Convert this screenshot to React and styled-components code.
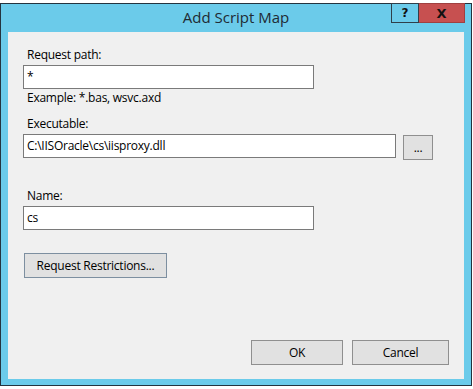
import React from "react";
import styled, { createGlobalStyle } from "styled-components";

const GlobalStyle = createGlobalStyle`
  html, body {
    margin: 0;
    padding: 0;
    background: #ffffff;
  }
  body {
    font-family: "Open Sans", "Noto Sans", sans-serif;
  }
`;

const Window = styled.div`
  position: relative;
  margin-top: 3px;
  width: 472px;
  height: 383px;
  box-sizing: border-box;
  border: 1px solid #24343f;
  background: #6bcbea;
  display: flex;
  flex-direction: column;
`;

const TitleBar = styled.div`
  height: 28px;
  display: flex;
  align-items: center;
  justify-content: center;
  font-size: 15px;
  color: #1f2a33;
  padding-bottom: 2px;
  box-sizing: border-box;
`;

const Caption = styled.div`
  position: absolute;
  top: -1px;
  right: 6px;
  display: flex;
`;

const CaptionButton = styled.div`
  width: ${(p) => (p.close ? "46px" : "28px")};
  height: 20px;
  box-sizing: border-box;
  border: 1px solid ${(p) => (p.close ? "#a04040" : "#2f3f4a")};
  border-left: ${(p) => (p.close ? "none" : "1px solid #2f3f4a")};
  background: ${(p) => (p.close ? "#c75050" : "transparent")};
  display: flex;
  align-items: center;
  justify-content: center;
  font-family: "DejaVu Sans", sans-serif;
  font-weight: bold;
  font-size: ${(p) => (p.close ? "13px" : "12px")};
  color: #111;
`;

const Frame = styled.div`
  flex: 1;
  padding: 0 7px 6px 7px;
  display: flex;
`;

const Client = styled.div`
  flex: 1;
  background: #f0f0f0;
  padding: 15px 15px 14px 15px;
  display: flex;
  flex-direction: column;
  font-size: 12px;
  letter-spacing: -0.25px;
  color: #000;
`;

const Label = styled.div`
  line-height: 16px;
  padding-left: 4px;
  margin-top: ${(p) => p.gap || 0}px;
  margin-bottom: 2px;
`;

const Hint = styled.div`
  line-height: 16px;
  padding-left: 4px;
  margin-top: 1px;
`;

const Row = styled.div`
  display: flex;
  align-items: flex-start;
  gap: 7px;
`;

const TextBox = styled.div`
  width: ${(p) => p.w}px;
  height: 24px;
  box-sizing: border-box;
  border: 1px solid #7a7a7a;
  background: #ffffff;
  padding: 3px 3px 0 3px;
  line-height: 16px;
  white-space: nowrap;
`;

const Button = styled.div`
  width: ${(p) => p.w}px;
  height: 25px;
  box-sizing: border-box;
  border: 1px solid ${(p) => (p.focus ? "#7d8fa0" : "#8f8f8f")};
  background: #e1e1e1;
  display: flex;
  align-items: center;
  justify-content: center;
  margin-top: ${(p) => p.top || 0}px;
  margin-left: ${(p) => p.left || 0}px;
`;

const Footer = styled.div`
  margin-top: auto;
  display: flex;
  justify-content: flex-end;
  gap: 9px;
`;

export default function App() {
  return (
    <>
      <GlobalStyle />
      <Window>
        <TitleBar>Add Script Map</TitleBar>
        <Caption>
          <CaptionButton>?</CaptionButton>
          <CaptionButton close>X</CaptionButton>
        </Caption>
        <Frame>
          <Client>
            <Label>Request path:</Label>
            <TextBox w={291}>*</TextBox>
            <Hint>Example: *.bas, wsvc.axd</Hint>
            <Label gap={10}>Executable:</Label>
            <Row>
              <TextBox w={373}>C:\IISOracle\cs\iisproxy.dll</TextBox>
              <Button w={30} top={1}>...</Button>
            </Row>
            <Label gap={28}>Name:</Label>
            <TextBox w={291}>cs</TextBox>
            <Button w={143} top={23} left={1} focus>
              Request Restrictions...
            </Button>
            <Footer>
              <Button w={92}>OK</Button>
              <Button w={97}>Cancel</Button>
            </Footer>
          </Client>
        </Frame>
      </Window>
    </>
  );
}
